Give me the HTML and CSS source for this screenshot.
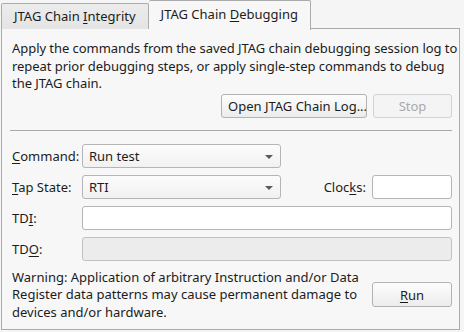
FILE: index.html
```html
<!DOCTYPE html>
<html lang="en">

<head>
    <meta charset="UTF-8">
    <title>JTAG Chain Debugging</title>
    <link rel="stylesheet" href="styles.css">
</head>

<body>
    <div class="tabs">
        <div class="tab">JTAG Chain <u>I</u>ntegrity</div>
        <div class="tab active">JTAG Chain <u>D</u>ebugging</div>
    </div>

    <div class="panel">
        <p class="intro">Apply the commands from the saved JTAG chain debugging session log to repeat prior debugging steps, or apply single-step commands to debug the JTAG chain.</p>

        <div class="actions">
            <button class="btn btn-open">Open JTAG Chain Log...</button>
            <button class="btn btn-stop" disabled>Stop</button>
        </div>

        <div class="sep"></div>

        <div class="form">
            <div class="row">
                <span class="lbl"><u>C</u>ommand:</span>
                <div class="combo">Run test<span class="arrow"></span></div>
            </div>
            <div class="row">
                <span class="lbl"><u>T</u>ap State:</span>
                <div class="combo">RTI<span class="arrow"></span></div>
                <span class="lbl-clocks">Cloc<u>k</u>s:</span>
                <div class="field field-clocks"></div>
            </div>
            <div class="row">
                <span class="lbl">TD<u>I</u>:</span>
                <div class="field field-wide"></div>
            </div>
            <div class="row">
                <span class="lbl">TD<u>O</u>:</span>
                <div class="field field-wide disabled"></div>
            </div>
        </div>

        <div class="warning">
            <p class="warn-text">Warning: Application of arbitrary Instruction and/or Data Register data patterns may cause permanent damage to devices and/or hardware.</p>
            <button class="btn btn-run"><u>R</u>un</button>
        </div>
    </div>
</body>

</html>
```

FILE: styles.css
```css
* {
    box-sizing: border-box;
}

body {
    margin: 0;
    background-color: #f5f5f5;
    font-family: "Noto Sans", sans-serif;
    font-size: 13px;
    color: #1c1c1c;
}

u {
    text-decoration-thickness: 1px;
    text-underline-offset: 2px;
}

.tabs {
    display: flex;
    align-items: flex-end;
    padding-left: 1px;
    height: 29px;
    position: relative;
    z-index: 1;
}

.tab {
    height: 26px;
    line-height: 24px;
    padding: 0 12px;
    background: linear-gradient(#ececec, #e4e4e4);
    border: 1px solid #ababab;
    border-bottom: none;
    border-radius: 2px 2px 0 0;
    white-space: nowrap;
}

.tab.active {
    height: 30px;
    line-height: 27px;
    margin-bottom: -1px;
    background: #f7f7f7;
    border-left: none;
    padding-left: 12px;
}

.panel {
    margin-left: 1px;
    width: 459px;
    height: 302px;
    margin-top: -1px;
    padding: 11px 7px 0 10px;
    background: #f7f7f7;
    border: 1px solid #ababab;
}

.intro {
    margin: 0 -8px 0 0;
    line-height: 17.5px;
    letter-spacing: -0.05px;
}

.actions {
    display: flex;
    justify-content: flex-end;
    gap: 6px;
    margin-top: 1px;
}

.btn {
    height: 24px;
    padding: 0 6px;
    font-family: "Noto Sans", sans-serif;
    font-size: 13px;
    color: #1c1c1c;
    background: linear-gradient(#fdfdfd, #ececec);
    border: 1px solid #b2b2b2;
    border-radius: 3px;
}

.btn-open {
    width: 146px;
    white-space: nowrap;
    overflow: hidden;
}

.btn-stop {
    width: 79px;
    color: #a9a9a9;
    background: #f4f4f4;
    border-color: #d2d2d2;
}

.sep {
    height: 1px;
    margin: 12px 0 0 -2px;
    background: #a9a9a9;
}

.form {
    display: flex;
    flex-direction: column;
    gap: 7px;
    margin-top: 13px;
}

.row {
    display: flex;
    align-items: center;
    height: 24px;
}

.lbl {
    width: 70px;
    flex: none;
}

.combo {
    position: relative;
    width: 199px;
    height: 24px;
    line-height: 22px;
    padding-left: 6px;
    background: linear-gradient(#fcfcfc, #f1f1f1);
    border: 1px solid #b5b5b5;
    border-radius: 3px;
}

.arrow {
    position: absolute;
    right: 7px;
    top: 10px;
    border-left: 4px solid transparent;
    border-right: 4px solid transparent;
    border-top: 4px solid #5a5a5a;
}

.lbl-clocks {
    margin-left: auto;
    margin-right: 6px;
}

.field {
    height: 24px;
    background: #ffffff;
    border: 1px solid #b5b5b5;
    border-radius: 3px;
}

.field-clocks {
    width: 80px;
}

.field-wide {
    flex: 1;
}

.field.disabled {
    background: #ececec;
    border-color: #c2c2c2;
}

.warning {
    display: flex;
    align-items: center;
    gap: 6px;
    margin-top: 8px;
}

.warn-text {
    flex: 1;
    margin: 0;
    line-height: 17.5px;
}

.btn-run {
    width: 80px;
    height: 25px;
    flex: none;
}
```
